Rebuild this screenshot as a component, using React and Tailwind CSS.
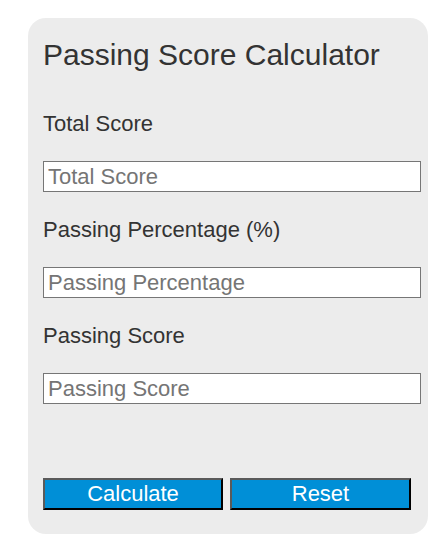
import { useState } from "react";

const FIELDS = [
  { label: "Total Score", placeholder: "Total Score" },
  { label: "Passing Percentage (%)", placeholder: "Passing Percentage" },
  { label: "Passing Score", placeholder: "Passing Score" },
];

export default function App() {
  const [values, setValues] = useState(["", "", ""]);

  const update = (i, v) => {
    const next = [...values];
    next[i] = v;
    setValues(next);
  };

  const calculate = () => {
    const total = parseFloat(values[0]);
    const pct = parseFloat(values[1]);
    if (!isNaN(total) && !isNaN(pct)) {
      update(2, String((total * pct) / 100));
    }
  };

  return (
    <div
      className="min-h-screen bg-white pt-[18px] pl-[28px] text-[#333]"
      style={{ fontFamily: '"Liberation Sans", Arial, sans-serif' }}
    >
      <div className="w-[400px] h-[516px] bg-[#ececec] rounded-[18px] px-[15px] pt-[20px]">
        <h1 className="text-[30px] leading-[34px] font-normal mb-[39px]">
          Passing Score Calculator
        </h1>

        {FIELDS.map((f, i) => (
          <div key={f.label}>
            <label className="block text-[22px] leading-[26px] mb-[24px]">
              {f.label}
            </label>
            <input
              type="text"
              value={values[i]}
              onChange={(e) => update(i, e.target.value)}
              placeholder={f.placeholder}
              className="block w-[378px] h-[31px] px-[4px] bg-white border border-[#767676] text-[22px] leading-[25px] placeholder:text-[#757575] outline-none mb-[25px]"
            />
          </div>
        ))}

        <div className="flex gap-[7px] mt-[74px]">
          <button
            onClick={calculate}
            className="w-[180px] h-[32px] bg-[#008fd7] text-white text-[22px] leading-[26px] border-2 border-t-[#5a5a5a] border-l-[#5a5a5a] border-b-black border-r-black"
          >
            Calculate
          </button>
          <button
            onClick={() => setValues(["", "", ""])}
            className="w-[181px] h-[32px] bg-[#008fd7] text-white text-[22px] leading-[26px] border-2 border-t-[#5a5a5a] border-l-[#5a5a5a] border-b-black border-r-black"
          >
            Reset
          </button>
        </div>
      </div>
    </div>
  );
}
